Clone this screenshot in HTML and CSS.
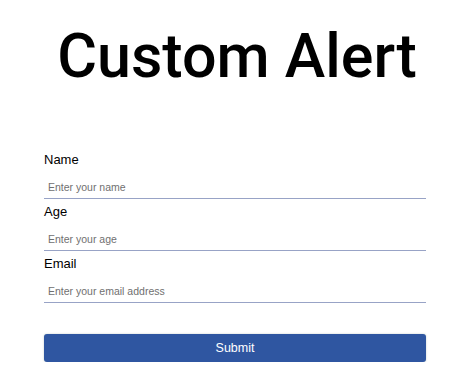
FILE: index.html
```html
<!DOCTYPE html>
<html>
<head>
<meta charset="utf-8">
<link rel="stylesheet" href="styles.css">
</head>
<body>
<h1 class="title">Custom Alert</h1>
<form class="form">
  <div class="field">
    <label class="label" for="name">Name</label>
    <input class="input" id="name" type="text" placeholder="Enter your name">
  </div>
  <div class="field">
    <label class="label" for="age">Age</label>
    <input class="input" id="age" type="text" placeholder="Enter your age">
  </div>
  <div class="field">
    <label class="label" for="email">Email</label>
    <input class="input" id="email" type="text" placeholder="Enter your email address">
  </div>
  <button class="submit" type="button">Submit</button>
</form>
</body>
</html>
```
FILE: styles.css
```css
html, body {
  margin: 0;
  padding: 0;
  background: #ffffff;
}
body {
  font-family: "Liberation Sans", Arial, sans-serif;
  color: #000;
}
.title {
  margin: 0;
  padding-top: 19px;
  height: 153px;
  box-sizing: border-box;
  text-align: center;
  font-family: Roboto, sans-serif;
  font-weight: 500;
  font-size: 61px;
  line-height: 74px;
}
.form {
  margin: 0 0 0 44px;
  width: 382px;
  display: flex;
  flex-direction: column;
}
.field {
  display: flex;
  flex-direction: column;
  margin-bottom: 6px;
}
.label {
  font-size: 13px;
  line-height: 14px;
  margin-bottom: 8px;
}
.input {
  height: 24px;
  box-sizing: border-box;
  border: none;
  border-bottom: 1px solid #98a3c6;
  padding: 0 4px;
  margin: 0;
  font-family: "Liberation Sans", Arial, sans-serif;
  font-size: 10.5px;
  outline: none;
  background: transparent;
}
.input::placeholder {
  color: #707070;
}
.submit {
  margin-top: 25px;
  height: 28px;
  border: none;
  border-radius: 3px;
  background: #2f56a1;
  color: #ffffff;
  font-family: "Liberation Sans", Arial, sans-serif;
  font-size: 12.5px;
  box-shadow: 0 0 2px rgba(0, 60, 40, 0.25);
  cursor: pointer;
}
```
